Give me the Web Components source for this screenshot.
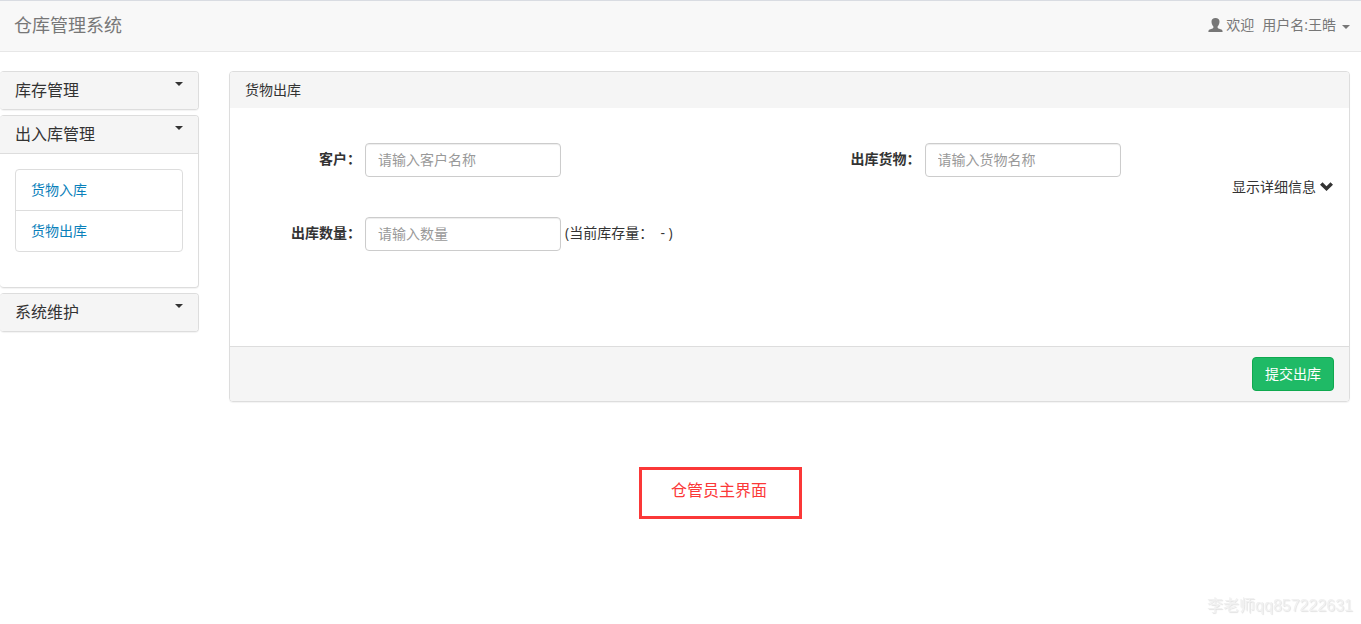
<!DOCTYPE html>
<html lang="zh-CN">
<head>
<meta charset="utf-8">
<meta name="viewport" content="width=device-width, initial-scale=1">
<title>仓库管理系统</title>
<style>
  body {
    margin: 0;
    min-height: 100vh;
    background-color: #fff;
    color: #333;
    font-family: "Open Sans", "Noto Sans CJK SC", sans-serif;
    font-size: 14px;
    line-height: 20px;
  }
  .layout {
    display: flex;
    align-items: flex-start;
    gap: 30px;
    padding: 19px 11px 0 0;
  }
  .sidebar {
    flex: 0 0 199px;
    display: flex;
    flex-direction: column;
    gap: 5px;
  }
  main {
    flex: 1;
    min-width: 0;
  }
</style>
</head>
<body>
  <app-navbar data-user="王皓">仓库管理系统</app-navbar>
  <div class="layout">
    <nav class="sidebar">
      <menu-panel data-title="库存管理"></menu-panel>
      <menu-panel data-title="出入库管理" open>
        <menu-link href="#in">货物入库</menu-link>
        <menu-link href="#out">货物出库</menu-link>
      </menu-panel>
      <menu-panel data-title="系统维护"></menu-panel>
    </nav>
    <main>
      <stock-panel>
        <span slot="title">货物出库</span>
        <stock-field data-label="客户：" data-placeholder="请输入客户名称"></stock-field>
        <stock-field data-label="出库货物：" data-placeholder="请输入货物名称"></stock-field>
        <stock-field slot="amount" data-label="出库数量：" data-placeholder="请输入数量">(当前库存量： &nbsp;- )</stock-field>
      </stock-panel>
      <page-caption>仓管员主界面</page-caption>
    </main>
  </div>
  <page-mark>李老师qq857222631</page-mark>

<script>
function makeTemplate(html) {
  const template = document.createElement("template");
  template.innerHTML = html;
  return template;
}

// attaches the shadow root and clones the template of the class into it
class BaseElement extends HTMLElement {
  constructor() {
    super();
    this.attachShadow({mode: "open"});
    this.shadowRoot.appendChild(this.constructor.template.content.cloneNode(true));
  }
}

class AppNavbar extends BaseElement {
  static template = makeTemplate(`
    <style>
      :host { display: block; }
      header {
        display: flex;
        justify-content: space-between;
        align-items: center;
        height: 48px;
        padding: 0 11px 2px 14px;
        background-color: #f8f8f8;
        border-top: 1px solid #d9dce2;
        border-bottom: 1px solid #e7e7e7;
        color: #777;
      }
      h1 { margin: 0; font-size: 18px; font-weight: 400; line-height: 20px; }
      button {
        display: flex;
        align-items: center;
        padding: 0;
        border: 0;
        background: none;
        color: inherit;
        font: inherit;
        cursor: pointer;
      }
      .user { width: 15px; height: 14px; margin-right: 3px; }
      .name { margin: 0 6px 0 8px; }
      .caret { width: 8px; height: 4px; margin-top: 4px; }
    </style>
    <header>
      <h1><slot></slot></h1>
      <button type="button">
        <svg class="user" viewBox="0 0 15 14" fill="currentColor" aria-hidden="true"><path d="M7.500 0C10 0 11.500 1.200 11.500 3.600C11.500 5.600 10.800 7.400 9.600 8.600V9.500C9.600 10 9.900 10.200 10.400 10.400L13.300 11.500C14.200 11.900 14.600 12.500 14.600 14H.400C.400 12.500.800 11.900 1.700 11.500L4.600 10.400C5.100 10.200 5.400 10 5.400 9.500V8.600C4.200 7.400 3.500 5.600 3.500 3.600C3.500 1.200 5 0 7.500 0Z"/></svg>
        <span>欢迎</span>
        <span class="name"></span>
        <svg class="caret" viewBox="0 0 8 4" fill="currentColor" aria-hidden="true"><path d="M0 0H8L4 4Z"/></svg>
      </button>
    </header>
  `);

  connectedCallback() {
    this.shadowRoot.querySelector(".name").textContent = `用户名:${this.getAttribute("data-user")}`;
  }
}

class MenuPanel extends BaseElement {
  static template = makeTemplate(`
    <style>
      :host {
        display: block;
        border: 1px solid #ddd;
        border-left: 0;
        border-radius: 4px;
        overflow: hidden;
        box-shadow: 0 1px 1px rgba(0, 0, 0, .05);
      }
      h2 { margin: 0; font-size: 16px; font-weight: 400; }
      button {
        display: flex;
        justify-content: space-between;
        align-items: flex-start;
        width: 100%;
        height: 37px;
        padding: 8px 15px 0 15px;
        border: 0;
        background-color: #f5f5f5;
        color: #333;
        font: inherit;
        line-height: 20px;
        text-align: left;
        cursor: pointer;
      }
      svg { width: 8px; height: 4px; margin-top: 2px; }
      .body { display: none; }
      :host([open]) .body {
        display: block;
        padding: 15px 15px 35px;
        border-top: 1px solid #ddd;
      }
      .list {
        border: 1px solid #ddd;
        border-radius: 4px;
      }
      ::slotted(:not(:first-child)) { border-top: 1px solid #ddd; }
    </style>
    <h2>
      <button type="button">
        <span></span>
        <svg viewBox="0 0 8 4" fill="currentColor" aria-hidden="true"><path d="M0 0H8L4 4Z"/></svg>
      </button>
    </h2>
    <div class="body"><div class="list"><slot></slot></div></div>
  `);

  connectedCallback() {
    const button = this.shadowRoot.querySelector("button");
    button.querySelector("span").textContent = this.getAttribute("data-title");
    button.onclick = () => this.toggleAttribute("open");
  }
}

class MenuLink extends BaseElement {
  static template = makeTemplate(`
    <style>
      :host { display: block; }
      a {
        display: block;
        padding: 10px 15px;
        color: #0a80ba;
        text-decoration: none;
      }
      a:hover { background-color: #f5f5f5; }
    </style>
    <a><slot></slot></a>
  `);

  connectedCallback() {
    this.shadowRoot.querySelector("a").href = this.getAttribute("href");
  }
}

class StockPanel extends BaseElement {
  static template = makeTemplate(`
    <style>
      :host { display: block; }
      section {
        border: 1px solid #ddd;
        border-radius: 4px;
        overflow: hidden;
        box-shadow: 0 1px 1px rgba(0, 0, 0, .05);
      }
      h2 {
        margin: 0;
        padding: 8px 15px;
        background-color: #f5f5f5;
        font-size: 14px;
        font-weight: 400;
        line-height: 20px;
      }
      .body { padding: 35px 0 95px; }
      .row { display: grid; grid-template-columns: 1fr 1fr; }
      .more { display: flex; justify-content: flex-end; margin-bottom: 20px; padding-right: 16px; }
      .more button {
        display: flex;
        align-items: center;
        gap: 4px;
        padding: 0;
        border: 0;
        background: none;
        color: #333;
        font: inherit;
        cursor: pointer;
      }
      .more svg { width: 13px; height: 9px; margin-bottom: 2px; }
      footer {
        display: flex;
        justify-content: flex-end;
        padding: 10px 15px;
        background-color: #f5f5f5;
        border-top: 1px solid #ddd;
      }
      .submit {
        padding: 6px 12px;
        border: 1px solid #0fa94f;
        border-radius: 4px;
        background-color: #1fba66;
        color: #fff;
        font: inherit;
        cursor: pointer;
      }
    </style>
    <section>
      <h2><slot name="title"></slot></h2>
      <div class="body">
        <div class="row"><slot></slot></div>
        <div class="more">
          <button type="button">
            <span>显示详细信息</span>
            <svg viewBox="0 0 13 9" fill="currentColor" aria-hidden="true"><path d="M2.500.300L6.500 4.200L10.500.300L13 2.700L6.500 9L0 2.700Z"/></svg>
          </button>
        </div>
        <slot name="amount"></slot>
      </div>
      <footer><button type="button" class="submit">提交出库</button></footer>
    </section>
  `);
}

class StockField extends BaseElement {
  static template = makeTemplate(`
    <style>
      :host { display: flex; align-items: center; gap: 4px; }
      label, span { padding-bottom: 2px; }
      label {
        flex: 0 0 131px;
        text-align: right;
        font-weight: 700;
      }
      input {
        box-sizing: border-box;
        width: 196px;
        height: 34px;
        padding: 5px 12px 7px;
        border: 1px solid #ccc;
        border-radius: 4px;
        background-color: #fff;
        box-shadow: inset 0 1px 1px rgba(0, 0, 0, .075);
        color: #555;
        font: inherit;
      }
      input::placeholder { color: #999; opacity: 1; }
    </style>
    <label for="field"></label>
    <input id="field" type="text">
    <span><slot></slot></span>
  `);

  connectedCallback() {
    this.shadowRoot.querySelector("label").textContent = this.getAttribute("data-label");
    this.shadowRoot.querySelector("input").placeholder = this.getAttribute("data-placeholder");
  }
}

class PageCaption extends BaseElement {
  static template = makeTemplate(`
    <style>
      :host { display: flex; margin: 65px 0 0 410px; }
      p {
        margin: 0;
        padding: 10px 32px 16px 29px;
        border: 3px solid #fb3838;
        color: #fb3838;
        font-size: 16px;
        line-height: 20px;
      }
    </style>
    <p><slot></slot></p>
  `);
}

class PageMark extends BaseElement {
  static template = makeTemplate(`
    <style>
      :host {
        display: block;
        position: fixed;
        right: 8px;
        bottom: 8px;
        color: #f1f1f1;
        font-family: "Liberation Sans", "Noto Sans CJK SC", sans-serif;
        font-size: 16px;
        line-height: 20px;
        text-shadow: 1px 1px 1px #e2e2e2;
      }
    </style>
    <slot></slot>
  `);
}

customElements.define("app-navbar", AppNavbar);
customElements.define("menu-panel", MenuPanel);
customElements.define("menu-link", MenuLink);
customElements.define("stock-panel", StockPanel);
customElements.define("stock-field", StockField);
customElements.define("page-caption", PageCaption);
customElements.define("page-mark", PageMark);
</script>
</body>
</html>
